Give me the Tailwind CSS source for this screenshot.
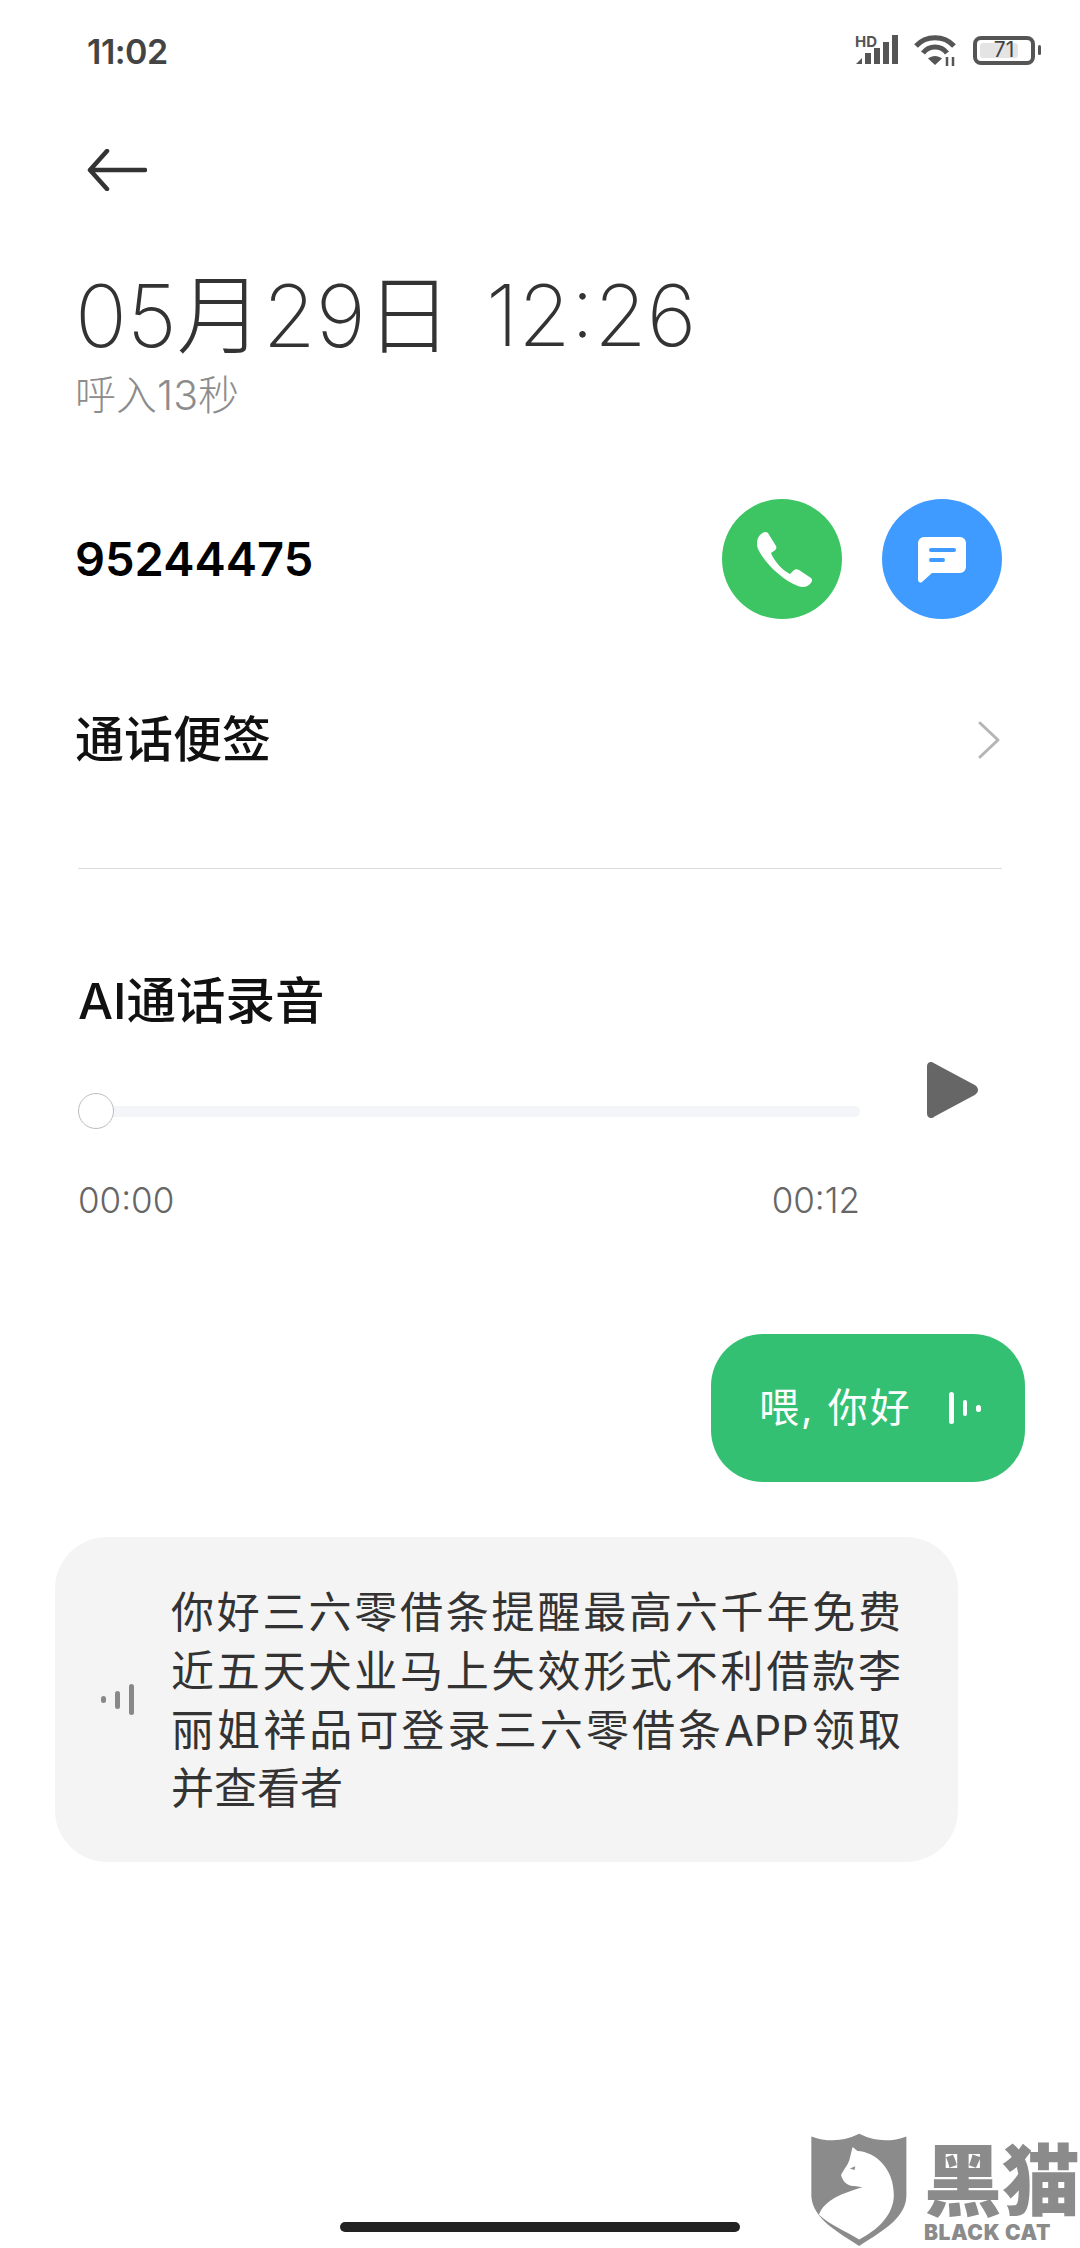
<!DOCTYPE html>
<html lang="zh">

<head>
    <meta charset="UTF-8">
    <meta name="viewport" content="width=device-width, initial-scale=1.0">
    <title>通话详情</title>
    <script src="https://cdn.jsdelivr.net/npm/@tailwindcss/browser@4"></script>
</head>

<body class="bg-white">
    <div class="relative w-[1080px] h-[2248px] overflow-hidden bg-white font-['Inter','Noto_Sans_CJK_SC',sans-serif] text-[#333]">
        <!-- status bar -->
        <div class="h-[100px] pl-[87px] pr-[39px] flex items-center justify-between">
            <span class="mt-[3px] text-[34px] font-semibold text-[#444] tracking-[-0.5px]">11:02</span>
            <div class="flex items-center gap-[15px]">
                <div class="relative w-[44px] h-[30px]">
                    <span class="absolute left-0 top-0 text-[15px] leading-[13px] font-bold text-[#555]">HD</span>
                    <svg width="44" height="30" viewBox="0 0 44 30" fill="#555">
                        <path d="M1 29 L7 23 V29 Z" />
                        <rect x="10" y="18" width="6" height="11" />
                        <rect x="19" y="13" width="6" height="16" />
                        <rect x="28" y="7" width="6" height="22" />
                        <rect x="37" y="0" width="6" height="29" />
                    </svg>
                </div>
                <svg width="44" height="32" viewBox="0 0 44 32" fill="none" stroke="#555" stroke-width="5">
                    <path d="M2 12 C12 1 30 1 40 12" />
                    <path d="M9 19 C15 11 27 11 33 19" />
                    <path d="M21 31 L14 24.5 C18 21 24 21 28 24.5 Z" fill="#555" stroke="none" />
                    <path d="M33 23 V32 M39 23 V32" stroke-width="2.5" />
                </svg>
                <div class="flex items-center gap-[3px]">
                    <div class="relative w-[62px] h-[29px] rounded-[8px] border-[4px] border-[#555] flex items-center justify-center">
                        <div class="absolute left-[3px] top-[3px] bottom-[3px] w-[38px] rounded-[3px] bg-[#e4e4e4]"></div>
                        <span class="relative text-[21px] font-normal text-[#444]">71</span>
                    </div>
                    <div class="w-[3px] h-[10px] rounded-full bg-[#555]"></div>
                </div>
            </div>
        </div>

        <!-- back -->
        <div class="h-[140px] pl-[87px] flex items-center">
            <svg width="60" height="42" viewBox="0 0 60 42" fill="none" stroke="#333" stroke-width="4.5" stroke-linecap="round" stroke-linejoin="round">
                <path d="M58 21 H3 M20 2 L3 21 L20 40" />
            </svg>
        </div>

        <!-- title -->
        <div class="mt-[26px] pl-[75px] h-[100px] flex items-center text-[86px] font-[250] text-[#333] whitespace-nowrap">
            <span>05月29日</span>
            <span class="ml-[34px] text-[85px]">12:26</span>
        </div>
        <div class="mt-[5px] pl-[75px] h-[50px] flex items-center text-[41px] font-light text-[#8c8c8c]">呼入13秒</div>

        <!-- number -->
        <div class="mt-[78px] pl-[75px] pr-[78px] h-[120px] flex items-center justify-between">
            <span class="text-[47px] font-semibold text-black">95244475</span>
            <div class="flex gap-[40px]">
                <div class="w-[120px] h-[120px] rounded-full bg-[#3cc562]">
                    <svg width="120" height="120" viewBox="0 0 120 120" fill="#fff">
                        <path d="M38 36 C41 33 44 32 46 34 L54 47 C55 49 54 51 52 52 L49 54 C52 62 60 71 68 75 L71 72 C73 70 75 70 77 71 L89 79 C91 81 90 83 88 85 C85 88 81 89 76 87 C60 81 42 63 36 50 C34 45 35 39 38 36 Z" />
                    </svg>
                </div>
                <div class="w-[120px] h-[120px] rounded-full bg-[#3f9bff]">
                    <svg width="120" height="120" viewBox="0 0 120 120">
                        <path fill="#fff" d="M42 38 H78 a6 6 0 0 1 6 6 V68 a6 6 0 0 1 -6 6 H50 L40 83 a2.5 2.5 0 0 1 -4 -2 V44 a6 6 0 0 1 6 -6 Z" />
                        <path stroke="#3f9bff" stroke-width="4" stroke-linecap="round" d="M49 51 H72 M49 61 H61" />
                    </svg>
                </div>
            </div>
        </div>

        <!-- notes -->
        <div class="mt-[71px] pl-[75px] pr-[80px] h-[100px] flex items-center justify-between">
            <span class="text-[49px] font-medium text-[#111]">通话便签</span>
            <svg width="22" height="38" viewBox="0 0 22 38" fill="none" stroke="#b5b5b5" stroke-width="3" stroke-linecap="round" stroke-linejoin="round">
                <path d="M2 2 L20 19 L2 36" />
            </svg>
        </div>

        <div class="mt-[78px] ml-[78px] mr-[78px] h-[1px] bg-[#dcdcdc]"></div>

        <!-- recording -->
        <div class="mt-[90px] pl-[78px] h-[84px] flex items-center text-[49.5px] font-medium text-[#111]">AI通话录音</div>

        <div class="mt-[17px] pl-[78px] h-[60px] flex items-start">
            <div class="relative w-[782px] h-[60px] flex items-center">
                <div class="w-full h-[11px] mt-[42px] rounded-full bg-[#f4f5f9]"></div>
                <div class="absolute left-0 top-[33px] w-[36px] h-[36px] rounded-full bg-white border border-[#bdbdbd]"></div>
            </div>
            <svg class="ml-[67px]" width="51" height="60" viewBox="0 0 54 60" fill="#666">
                <path d="M0 5 C0 0 5 -1 8 2 L51 25 C55 28 55 32 51 35 L8 58 C5 61 0 60 0 55 Z" />
            </svg>
        </div>

        <div class="mt-[55px] ml-[78px] w-[782px] h-[50px] flex items-center justify-between text-[35px] font-light text-[#666]">
            <span>00:00</span>
            <span>00:12</span>
        </div>

        <!-- bubbles -->
        <div class="mt-[109px] ml-[711px] w-[314px] h-[148px] rounded-[52px] bg-[#34c073] pl-[48px] flex items-center text-white">
            <span class="text-[40px] tracking-[2px] whitespace-pre">喂, 你好</span>
            <div class="ml-[37px] flex items-center gap-[9px]">
                <div class="w-[5px] h-[32px] rounded-full bg-white"></div>
                <div class="w-[4px] h-[16px] rounded-full bg-white"></div>
                <div class="w-[5px] h-[7px] rounded-full bg-white"></div>
            </div>
        </div>

        <div class="mt-[55px] ml-[55px] w-[903px] h-[325px] rounded-[52px] bg-[#f4f4f4] pl-[46px] flex items-center">
            <div class="flex items-center gap-[9px] w-[70px]">
                <div class="w-[5px] h-[7px] rounded-full bg-[#888]"></div>
                <div class="w-[5px] h-[18px] rounded-full bg-[#888]"></div>
                <div class="w-[5px] h-[31px] rounded-full bg-[#888]"></div>
            </div>
            <div class="mt-[2px] w-[730px] text-[43px] leading-[58.6px] text-[#333]">
                <p class="[text-align-last:justify]">你好三六零借条提醒最高六千年免费</p>
                <p class="[text-align-last:justify]">近五天犬业马上失效形式不利借款李</p>
                <p class="[text-align-last:justify]">丽姐祥品可登录三六零借条APP领取</p>
                <p>并查看者</p>
            </div>
        </div>

        <!-- home indicator -->
        <div class="absolute left-[340px] top-[2222px] w-[400px] h-[10px] rounded-full bg-[#222]"></div>

        <!-- watermark -->
        <div class="absolute left-[780px] top-[2110px] w-[300px] h-[138px] flex">
            <svg width="133" height="138" viewBox="0 0 400 414">
                <path fill="#8b8b8b" d="M95 78 Q170 105 240 70 Q310 105 383 78 L383 260 C380 330 300 370 240 410 C180 370 100 330 95 260 Z" />
                <path fill="#fff" d="M220 110 L235 122 C290 125 345 175 345 255 C345 320 290 365 240 390 C200 365 150 345 118 315 C135 270 190 250 250 232 L225 228 C205 230 190 215 185 195 C195 175 205 165 210 150 Z" />
                <path fill="#8b8b8b" d="M212 175 L228 168 L226 180 Z" />
            </svg>
            <div class="ml-[12px] flex flex-col text-[#8b8b8b]">
                <span class="mt-[30px] h-[72px] text-[78px] leading-[72px] font-black whitespace-nowrap font-['Noto_Sans_CJK_SC',sans-serif]">黑猫</span>
                <span class="mt-[10px] text-[21px] leading-[22px] font-black whitespace-nowrap tracking-[0.6px]">BLACK CAT</span>
            </div>
        </div>
    </div>
</body>

</html>
